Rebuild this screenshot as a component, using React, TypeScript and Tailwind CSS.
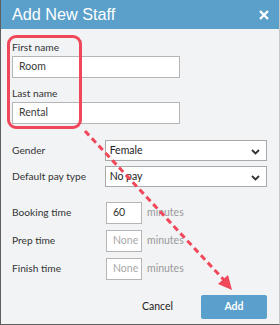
import React from "react";

const lato = { fontFamily: "Lato, 'Open Sans', sans-serif" };

function Chevron() {
  return (
    <svg width="9" height="6" viewBox="0 0 9 6" className="absolute right-[6px] top-[8px]">
      <path d="M1 1 L4.5 4.5 L8 1" fill="none" stroke="#333" strokeWidth="1.8" />
    </svg>
  );
}

function Select({ value }: { value: string }) {
  return (
    <div className="relative w-[163px] h-[21px] bg-white border border-[#a9a9a9] flex items-center pl-[4px] text-[10.5px] text-[#222]">
      {value}
      <Chevron />
    </div>
  );
}

function TimeRow({ label, value, placeholder }: { label: string; value?: string; placeholder?: boolean }) {
  return (
    <div className="flex items-center">
      <div className="w-[94px] text-[10.2px] text-[#333]">{label}</div>
      <div
        className={`w-[36px] h-[22px] bg-white border border-[#b5b5b5] flex items-center pl-[6px] text-[10.5px] ${
          placeholder ? "text-[#a8a8a8]" : "text-[#333]"
        }`}
      >
        {value}
      </div>
      <div className="ml-[5px] text-[10.5px] text-[#999]">minutes</div>
    </div>
  );
}

export default function App() {
  return (
    <div className="relative w-[280px] h-[325px] bg-[#f2f3f5] border-l border-b border-r border-[#5f5f5f] border-r-[#c8c8c8] overflow-hidden" style={lato}>
      <div className="h-[29px] bg-[#5b9fcb] flex items-center justify-between pl-[11px] pr-[10px]">
        <span className="text-white text-[16.2px] leading-none" style={{ fontFamily: "'Liberation Sans', Arial, sans-serif" }}>
          Add New Staff
        </span>
        <svg width="10" height="10" viewBox="0 0 10 10" className="mt-[1px]">
          <path d="M1 1 L9 9 M9 1 L1 9" stroke="white" strokeWidth="2.4" />
        </svg>
      </div>

      <div className="pl-[11px] pr-[12px]">
        <div className="pt-[11px] text-[10.2px] leading-[14px] text-[#333]">First name</div>
        <div className="mt-[2px] w-[168px] h-[22px] bg-white border border-[#b5b5b5] flex items-center pl-[6px] text-[10.5px] text-[#3a3a3a]">
          Room
        </div>
        <div className="mt-[8px] text-[10.2px] leading-[14px] text-[#333]">Last name</div>
        <div className="mt-[2px] w-[168px] h-[22px] bg-white border border-[#b5b5b5] flex items-center pl-[6px] text-[10.5px] text-[#3a3a3a]">
          Rental
        </div>

        <div className="mt-[16px] flex items-center">
          <div className="w-[93px] text-[10.2px] text-[#333]">Gender</div>
          <Select value="Female" />
        </div>
        <div className="mt-[5px] flex items-center">
          <div className="w-[93px] text-[10.2px] text-[#333]">Default pay type</div>
          <Select value="No pay" />
        </div>

        <div className="mt-[15px] flex flex-col gap-[6px]">
          <TimeRow label="Booking time" value="60" />
          <TimeRow label="Prep time" value="None" placeholder />
          <TimeRow label="Finish time" value="None" placeholder />
        </div>

        <div className="mt-[15px] flex items-center justify-end">
          <span className="text-[10.5px] text-[#222] mr-[28px]">Cancel</span>
          <div className="w-[66px] h-[24px] rounded-[2px] bg-[#5ba0cc] flex items-center justify-center text-white text-[10.5px] font-bold">
            Add
          </div>
        </div>
      </div>

      <div className="absolute left-[6px] top-[35px] w-[75px] h-[94px] border-[3px] border-[#f0475a] rounded-[9px] pointer-events-none" />

      <svg className="absolute left-0 top-0 pointer-events-none" width="280" height="325" viewBox="0 0 280 325">
        <line x1="84" y1="131" x2="223" y2="280" stroke="#f0475a" strokeWidth="3" strokeDasharray="6 4" />
        <polygon points="231,290 217,284 227,275" fill="#f0475a" />
      </svg>
    </div>
  );
}
